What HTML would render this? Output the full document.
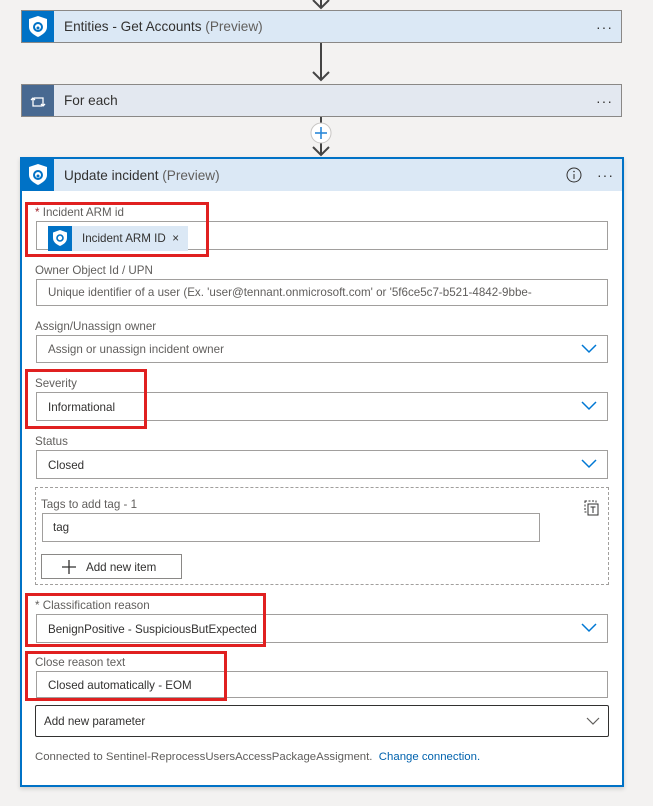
<!DOCTYPE html>
<html><head><style>
body{margin:0;width:653px;height:806px;background:#f3f2f1;font-family:"Liberation Sans",sans-serif;position:relative;overflow:hidden}
.a{position:absolute}
.card{position:absolute;left:21px;width:601px;border:1px solid #8a8886;box-sizing:border-box}
.ico{position:absolute;left:0;top:0;width:32px;height:100%;}
.title{position:absolute;left:42px;font-size:13.6px;color:#323130}
.dots{position:absolute;right:8px;font-size:14px;color:#323130;letter-spacing:1px}
.lbl{position:absolute;left:35px;font-size:11.6px;color:#605e5c}
.inp{position:absolute;left:36px;width:572px;border:1px solid #a19f9d;box-sizing:border-box;background:#fff;font-size:11.6px;color:#323130}
.inp span{position:absolute;left:11px}
.chev{position:absolute;right:10px;top:8px}
.red{position:absolute;border:3px solid #e02020;box-sizing:border-box}
</style></head><body>
<svg class="a" style="left:0;top:0" width="653" height="160">
<g stroke="#444" stroke-width="2" fill="none">
<line x1="321" y1="0" x2="321" y2="8"/><polyline points="313,0 321,8 329,0"/>
<line x1="321" y1="43" x2="321" y2="80"/><polyline points="313,72 321,80 329,72"/>
<line x1="321" y1="117" x2="321" y2="155"/><polyline points="313,147 321,155 329,147"/>
</g>
<circle cx="321" cy="133" r="10" fill="#fff" stroke="#c8c6c4"/>
<g stroke="#2b88d8" stroke-width="1.6"><line x1="315" y1="133" x2="327" y2="133"/><line x1="321" y1="127" x2="321" y2="139"/></g>
</svg>

<div class="card" style="top:10px;height:33px;background:#dbe8f5">
<div class="ico" style="background:#0072c6"><svg width="32" height="31"><path d="M16 5 L25 8 V16 C25 21 20 24 16 26 C12 24 7 21 7 16 V8 Z" fill="#fff"/><circle cx="16" cy="16" r="4" fill="none" stroke="#0072c6" stroke-width="2"/><circle cx="16" cy="17" r="1.5" fill="#0072c6"/></svg></div>
<div class="title" style="top:8px">Entities - Get Accounts <span style="color:#605e5c">(Preview)</span></div>
<div class="dots" style="top:8px">···</div></div>

<div class="card" style="top:84px;height:33px;background:#e3e8f0">
<div class="ico" style="background:#486991"><svg width="32" height="31"><g stroke="#fff" stroke-width="1.3" fill="none"><polyline points="11,13 11,21 20,21"/><polyline points="21,21 21,13 12,13"/><polyline points="9,15 11,13 13,15"/><polyline points="19,19 21,21 23,19"/></g></svg></div>
<div class="title" style="top:8px">For each</div>
<div class="dots" style="top:8px">···</div></div>

<div class="a" style="left:20px;top:157px;width:604px;height:630px;border:2px solid #0072c6;box-sizing:border-box;background:#fff;box-shadow:0 2px 4px rgba(0,0,0,.15)">
<div class="a" style="left:0;top:0;width:600px;height:32px;background:#dbe8f5"></div>
<div class="a" style="left:0;top:0;width:32px;height:32px;background:#0072c6"><svg width="32" height="32"><path d="M16 5 L25 8 V16 C25 21 20 24 16 26 C12 24 7 21 7 16 V8 Z" fill="#fff"/><circle cx="16" cy="16" r="4" fill="none" stroke="#0072c6" stroke-width="2"/><circle cx="16" cy="17" r="1.5" fill="#0072c6"/></svg></div>
<div class="title" style="top:9px;left:42px">Update incident <span style="color:#605e5c">(Preview)</span></div>
<svg class="a" style="left:544px;top:8px" width="16" height="16"><circle cx="8" cy="8" r="7" fill="none" stroke="#323130"/><line x1="8" y1="7" x2="8" y2="12" stroke="#323130"/><circle cx="8" cy="4.5" r=".8" fill="#323130"/></svg>
<div class="dots" style="top:8px;right:8px">···</div>
</div>

<div class="lbl" style="top:206px"><span style="color:#a4262c">*</span> Incident ARM id</div>
<div class="inp" style="top:221px;height:29px"></div>
<div class="a" style="left:48px;top:226px;width:140px;height:25px;background:#dbe8f5"><div class="a" style="left:0;top:0;width:24px;height:25px;background:#0072c6"><svg width="24" height="25"><path d="M12 4 L19 6.5 V12 C19 16 15.5 18.5 12 20 C8.5 18.5 5 16 5 12 V6.5 Z" fill="#fff"/><circle cx="12" cy="12" r="3" fill="none" stroke="#0072c6" stroke-width="1.6"/></svg></div><span class="a" style="left:34px;top:6px;font-size:11.6px;color:#323130">Incident ARM ID &nbsp;×</span></div>

<div class="lbl" style="top:264px">Owner Object Id / UPN</div>
<div class="inp" style="top:279px;height:27px;color:#605e5c"><span style="top:6px">Unique identifier of a user (Ex. 'user@tennant.onmicrosoft.com' or '5f6ce5c7-b521-4842-9bbe-</span></div>

<div class="lbl" style="top:320px">Assign/Unassign owner</div>
<div class="inp" style="top:335px;height:28px;color:#605e5c"><span style="top:7px">Assign or unassign incident owner</span><svg class="chev" width="16" height="10"><polyline points="1,1 8,8 15,1" fill="none" stroke="#0078d4" stroke-width="1.5"/></svg></div>

<div class="lbl" style="top:377px">Severity</div>
<div class="inp" style="top:392px;height:29px"><span style="top:8px">Informational</span><svg class="chev" width="16" height="10"><polyline points="1,1 8,8 15,1" fill="none" stroke="#0078d4" stroke-width="1.5"/></svg></div>

<div class="lbl" style="top:435px">Status</div>
<div class="inp" style="top:450px;height:29px"><span style="top:8px">Closed</span><svg class="chev" width="16" height="10"><polyline points="1,1 8,8 15,1" fill="none" stroke="#0078d4" stroke-width="1.5"/></svg></div>

<div class="a" style="left:35px;top:487px;width:574px;height:98px;border:1px dashed #a19f9d;box-sizing:border-box"></div>
<div class="lbl" style="top:498px;left:41px">Tags to add tag - 1</div>
<div class="a" style="left:42px;top:513px;width:498px;height:29px;border:1px solid #a19f9d;box-sizing:border-box;font-size:11.6px;color:#323130"><span class="a" style="left:10px;top:7px">tag</span></div>
<svg class="a" style="left:584px;top:500px" width="16" height="16"><rect x="1" y="1" width="11" height="11" fill="none" stroke="#323130" stroke-dasharray="2,1.5"/><rect x="4" y="4" width="10" height="11" fill="#fff" stroke="#323130"/><path d="M6.5 7h5M9 7v6" stroke="#323130"/></svg>
<div class="a" style="left:41px;top:554px;width:141px;height:25px;border:1px solid #8a8886;box-sizing:border-box;font-size:11.6px;color:#323130"><svg class="a" style="left:20px;top:5px" width="14" height="14"><path d="M7 0v14M0 7h14" stroke="#323130" stroke-width="1.3"/></svg><span class="a" style="left:44px;top:6px">Add new item</span></div>

<div class="lbl" style="top:599px">* Classification reason</div>
<div class="inp" style="top:614px;height:29px"><span style="top:8px;left:11px">BenignPositive - SuspiciousButExpected</span><svg class="chev" width="16" height="10"><polyline points="1,1 8,8 15,1" fill="none" stroke="#0078d4" stroke-width="1.5"/></svg></div>

<div class="lbl" style="top:656px">Close reason text</div>
<div class="inp" style="top:671px;height:27px"><span style="top:7px">Closed automatically - EOM</span></div>

<div class="a" style="left:35px;top:705px;width:574px;height:32px;border:1px solid #323130;box-sizing:border-box;border-radius:2px;font-size:11.6px;color:#323130"><span class="a" style="left:8px;top:9px">Add new parameter</span><svg class="a" style="right:8px;top:11px" width="14" height="9"><polyline points="1,1 7,7 13,1" fill="none" stroke="#605e5c" stroke-width="1.2"/></svg></div>

<div class="a" style="left:35px;top:751px;font-size:11.4px;color:#605e5c">Connected to Sentinel-ReprocessUsersAccessPackageAssigment. &nbsp;<span style="color:#0062ad">Change connection.</span></div>

<div class="red" style="left:25px;top:202px;width:184px;height:55px"></div>
<div class="red" style="left:25px;top:369px;width:122px;height:60px"></div>
<div class="red" style="left:25px;top:593px;width:241px;height:54px"></div>
<div class="red" style="left:25px;top:651px;width:202px;height:50px"></div>
</body></html>
